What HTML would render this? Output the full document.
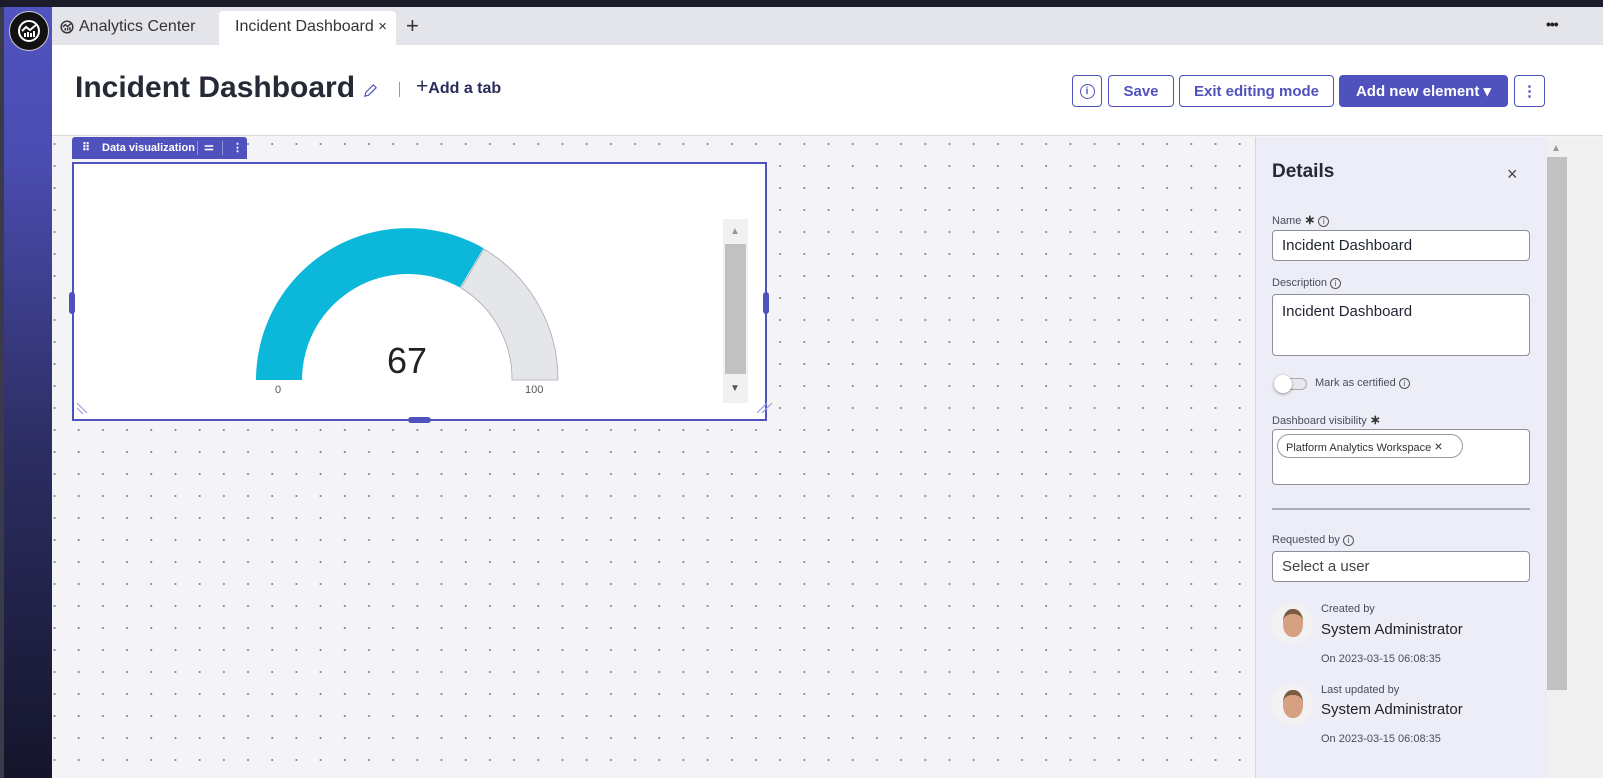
<!DOCTYPE html>
<html><head><meta charset="utf-8"><style>
*{box-sizing:border-box;margin:0;padding:0}
body{width:1603px;height:778px;overflow:hidden;font-family:"Liberation Sans",sans-serif;background:#f4f4f7;position:relative;color:#1f2430}
.abs{position:absolute}
.btn{position:absolute;top:75px;height:32px;border:1px solid #4f52bd;border-radius:4px;background:#fff;color:#4f52bd;font-weight:bold;font-size:15px;display:flex;align-items:center;justify-content:center}
.lbl{position:absolute;left:1272px;font-size:11px;color:#4a4d5a}
.inp{position:absolute;left:1272px;width:258px;background:#fff;border:1px solid #8d8f99;border-radius:4px;font-size:15px;padding-left:9px}
.dot{display:inline-block;width:11px;height:11px;border:1px solid #555;border-radius:50%;font-size:8px;text-align:center;line-height:9px;vertical-align:middle;margin-left:3px}
.av{position:absolute;left:1272px;width:41px;height:41px;border-radius:50%;background:#f2f2f2;overflow:hidden}
.av i{position:absolute;left:11px;top:6px;width:20px;height:28px;border-radius:45%;background:#d6a182;border-top:5px solid #7a5a40}
</style></head><body>
<div class="abs" style="left:0;top:0;width:1603px;height:7px;background:#1b1b29"></div>
<div class="abs" style="left:0;top:7px;width:4px;height:771px;background:#3a3a4a"></div>
<div class="abs" style="left:4px;top:7px;width:48px;height:771px;background:linear-gradient(#5153c0 0%,#4a4cb0 20%,#2e2f66 55%,#14152a 100%)"></div>
<div class="abs" style="left:9px;top:11px;width:40px;height:40px;border-radius:50%;background:#111;border:1px solid #ccc"></div>
<svg class="abs" style="left:17px;top:19px" width="24" height="24" viewBox="0 0 24 24" fill="none" stroke="#fff" stroke-width="2"><circle cx="12" cy="12" r="10"/><path d="M5 12l4-4 4 3 6-5M8 18v-4M11 18v-5M14 18v-4M17 18v-6"/></svg>
<div class="abs" style="left:52px;top:7px;width:1551px;height:38px;background:#e4e5ea"></div>
<svg class="abs" style="left:60px;top:20px" width="14" height="14" viewBox="0 0 24 24" fill="none" stroke="#333" stroke-width="2.5"><circle cx="12" cy="12" r="10"/><path d="M5 12l4-4 4 3 6-5M9 18v-4M13 18v-5M17 18v-6"/></svg>
<div class="abs" style="left:79px;top:18px;font-size:16px;color:#333">Analytics Center</div>
<div class="abs" style="left:219px;top:11px;width:177px;height:34px;background:#fff;border-radius:4px 4px 0 0"></div>
<div class="abs" style="left:235px;top:18px;font-size:16px;color:#333">Incident Dashboard <span style="font-size:15px">×</span></div>
<div class="abs" style="left:406px;top:13px;font-size:22px;color:#333">+</div>
<div class="abs" style="left:1546px;top:16px;font-size:14px;font-weight:bold;color:#222;letter-spacing:-1px">•••</div>
<div class="abs" style="left:52px;top:45px;width:1551px;height:91px;background:#fff;border-bottom:1px solid #d8d8dd"></div>
<div class="abs" style="left:75px;top:71px;font-size:30px;font-weight:bold;color:#262a36">Incident Dashboard</div>
<svg class="abs" style="left:363px;top:83px" width="15" height="15" viewBox="0 0 16 16" fill="none" stroke="#4f52bd" stroke-width="1.3"><path d="M2 14l1-4 8-8 3 3-8 8z"/></svg>
<div class="abs" style="left:399px;top:82px;width:1px;height:15px;background:#999"></div>
<div class="abs" style="left:416px;top:79px;font-size:16px;font-weight:bold;color:#2a2d5a"><span style="font-weight:normal;font-size:21px;line-height:16px">+</span>Add a tab</div>
<div class="btn" style="left:1072px;width:30px"><span class="dot" style="border-color:#4f52bd;width:15px;height:15px;line-height:13px;font-size:10px;margin:0">i</span></div>
<div class="btn" style="left:1108px;width:66px">Save</div>
<div class="btn" style="left:1179px;width:155px">Exit editing mode</div>
<div class="btn" style="left:1339px;width:169px;background:#4f52bd;color:#fff">Add new element ▾</div>
<div class="btn" style="left:1514px;width:31px">⋮</div>
<div class="abs" style="left:52px;top:137px;width:1204px;height:641px;background-image:radial-gradient(circle,#8a8a94 0.9px,transparent 1.2px);background-size:24.2px 22px;background-position:63px 18px"></div>
<div class="abs" style="left:72px;top:137px;width:175px;height:22px;background:#4f52bd;border-radius:3px 3px 0 0;color:#fff;font-size:11px;font-weight:bold"><span class="abs" style="left:10px;top:4px">⠿</span><span class="abs" style="left:30px;top:5px">Data visualization</span><span class="abs" style="left:125px;top:4px;width:1px;height:14px;background:#8f91d8"></span><span class="abs" style="left:132px;top:3px">⚌</span><span class="abs" style="left:150px;top:4px;width:1px;height:14px;background:#8f91d8"></span><span class="abs" style="left:160px;top:4px">⋮</span></div>
<div class="abs" style="left:72px;top:162px;width:695px;height:259px;background:#fff;border:2px solid #4f52bd"></div>
<div class="abs" style="left:69px;top:292px;width:6px;height:22px;background:#4f52bd;border-radius:3px"></div>
<div class="abs" style="left:763px;top:292px;width:6px;height:22px;background:#4f52bd;border-radius:3px"></div>
<div class="abs" style="left:408px;top:417px;width:23px;height:6px;background:#4f52bd;border-radius:3px"></div>
<svg class="abs" style="left:72px;top:137px" width="700" height="290">
<path d="M184 243A152 152 0 0 1 411.5 111.2L388 150.6A106 106 0 0 0 230 243Z" fill="#0bb8d9"/>
<path d="M412 112A152 152 0 0 1 486 243L440 243A106 106 0 0 0 389 151Z" fill="#e4e6ea" stroke="#a9aab5" stroke-width="0.8"/>
<path d="M5 266l10 10M5 271l6 6" stroke="#9c9ede" stroke-width="1.2"/>
<path d="M690 276l10-10M685 276l10-10" stroke="#9c9ede" stroke-width="1.2"/>
</svg>
<div class="abs" style="left:387px;top:340px;font-size:36px;font-weight:300;color:#222">67</div>
<div class="abs" style="left:275px;top:384px;font-size:11px;color:#555">0</div>
<div class="abs" style="left:525px;top:384px;font-size:11px;color:#555">100</div>
<div class="abs" style="left:723px;top:219px;width:25px;height:184px;background:#f1f1f1"></div>
<div class="abs" style="left:725px;top:244px;width:21px;height:130px;background:#c1c1c1"></div>
<div class="abs" style="left:730px;top:226px;font-size:10px;color:#999">▲</div>
<div class="abs" style="left:730px;top:383px;font-size:10px;color:#555">▼</div>
<div class="abs" style="left:1255px;top:137px;width:292px;height:641px;background:#ecedf6;border-left:1px solid #d5d6de"></div>
<div class="abs" style="left:1547px;top:137px;width:56px;height:641px;background:#f0f0f0"></div>
<div class="abs" style="left:1547px;top:157px;width:20px;height:533px;background:#c1c1c1"></div>
<div class="abs" style="left:1551px;top:143px;font-size:10px;color:#999">▲</div>
<div class="abs" style="left:1272px;top:161px;font-size:19px;font-weight:bold;color:#262a36">Details</div>
<div class="abs" style="left:1507px;top:164px;font-size:18px;color:#444">×</div>
<div class="lbl" style="top:212px">Name <b style="font-size:13px;color:#333">∗</b><span class="dot">i</span></div>
<div class="inp" style="top:230px;height:31px;line-height:29px">Incident Dashboard</div>
<div class="lbl" style="top:277px">Description<span class="dot">i</span></div>
<div class="inp" style="top:294px;height:62px;padding-top:8px">Incident Dashboard</div>
<div class="abs" style="left:1275px;top:378px;width:32px;height:12px;border:1px solid #aaa;border-radius:6px;background:#e8e9ee"></div>
<div class="abs" style="left:1274px;top:375px;width:18px;height:18px;border-radius:50%;background:#fff;box-shadow:0 1px 3px rgba(0,0,0,.4)"></div>
<div class="lbl" style="left:1315px;top:377px">Mark as certified<span class="dot">i</span></div>
<div class="lbl" style="top:412px">Dashboard visibility <b style="font-size:13px;color:#333">∗</b></div>
<div class="inp" style="top:429px;height:56px;padding:0"></div>
<div class="abs" style="left:1277px;top:434px;width:186px;height:24px;border:1px solid #999;border-radius:12px;font-size:11px;line-height:22px;padding-left:8px;color:#333">Platform Analytics Workspace <span style="font-size:14px">×</span></div>
<div class="abs" style="left:1272px;top:508px;width:258px;height:2px;background:#a9abb9"></div>
<div class="lbl" style="top:534px">Requested by<span class="dot">i</span></div>
<div class="inp" style="top:551px;height:31px;line-height:29px;color:#444">Select a user</div>
<div class="av" style="top:603px"><i></i></div>
<div class="av" style="top:684px"><i></i></div>
<div class="lbl" style="left:1321px;top:603px">Created by</div>
<div class="abs" style="left:1321px;top:621px;font-size:15px;color:#222">System Administrator</div>
<div class="lbl" style="left:1321px;top:653px">On 2023-03-15 06:08:35</div>
<div class="lbl" style="left:1321px;top:684px">Last updated by</div>
<div class="abs" style="left:1321px;top:701px;font-size:15px;color:#222">System Administrator</div>
<div class="lbl" style="left:1321px;top:733px">On 2023-03-15 06:08:35</div>
</body></html>
